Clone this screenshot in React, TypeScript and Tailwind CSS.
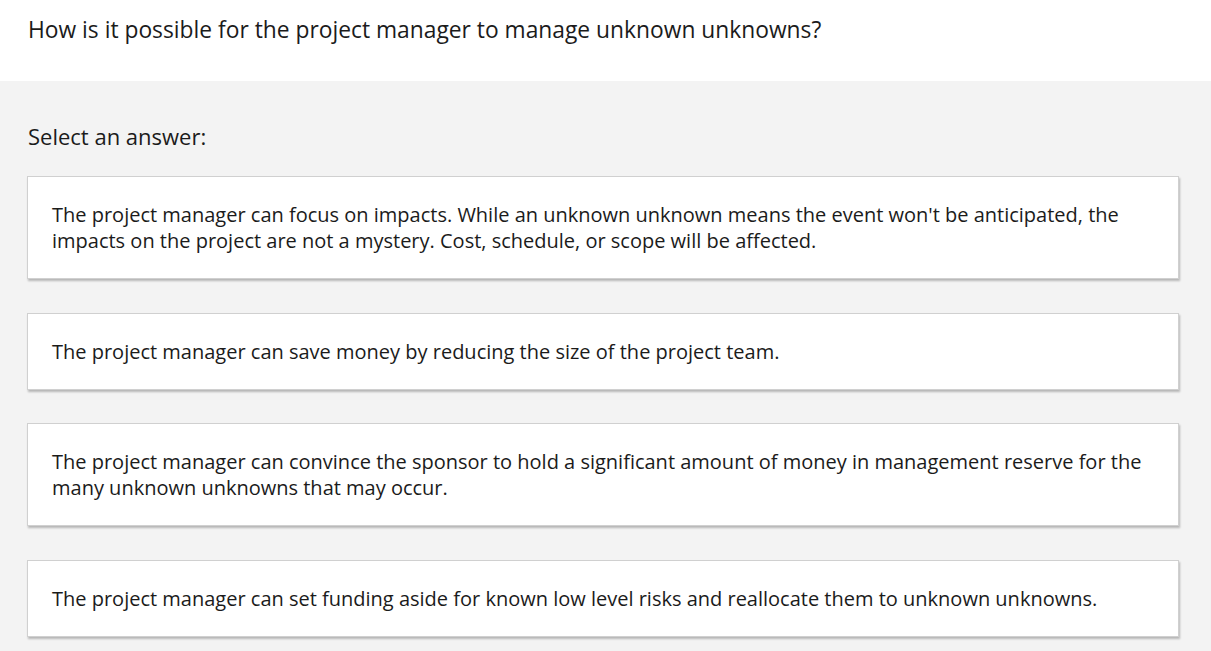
import React from "react";

const answers = [
  "The project manager can focus on impacts. While an unknown unknown means the event won't be anticipated, the impacts on the project are not a mystery. Cost, schedule, or scope will be affected.",
  "The project manager can save money by reducing the size of the project team.",
  "The project manager can convince the sponsor to hold a significant amount of money in management reserve for the many unknown unknowns that may occur.",
  "The project manager can set funding aside for known low level risks and reallocate them to unknown unknowns.",
];

export default function App() {
  return (
    <div className="min-h-screen bg-[#f3f3f3] text-[#1b1b1b]" style={{ fontFamily: '"Open Sans", sans-serif' }}>
      <div className="bg-white h-[81px] px-[28px] pt-[14px]">
        <h1 className="text-[22.8px] leading-[31px] font-normal">
          How is it possible for the project manager to manage unknown unknowns?
        </h1>
      </div>
      <div className="px-[27px] pt-[40px]">
        <p className="px-px text-[22px] leading-[30px]">Select an answer:</p>
        <div className="mt-[25px] w-[1152px] flex flex-col gap-[33.5px]">
          {answers.map((a) => (
            <div
              key={a}
              className="bg-white border border-[#d0d0d0] shadow-[1px_2px_2px_rgba(0,0,0,0.25)] px-[24px] pt-[25px] pb-[24px] text-[20px] leading-[26px]"
            >
              {a}
            </div>
          ))}
        </div>
      </div>
    </div>
  );
}
